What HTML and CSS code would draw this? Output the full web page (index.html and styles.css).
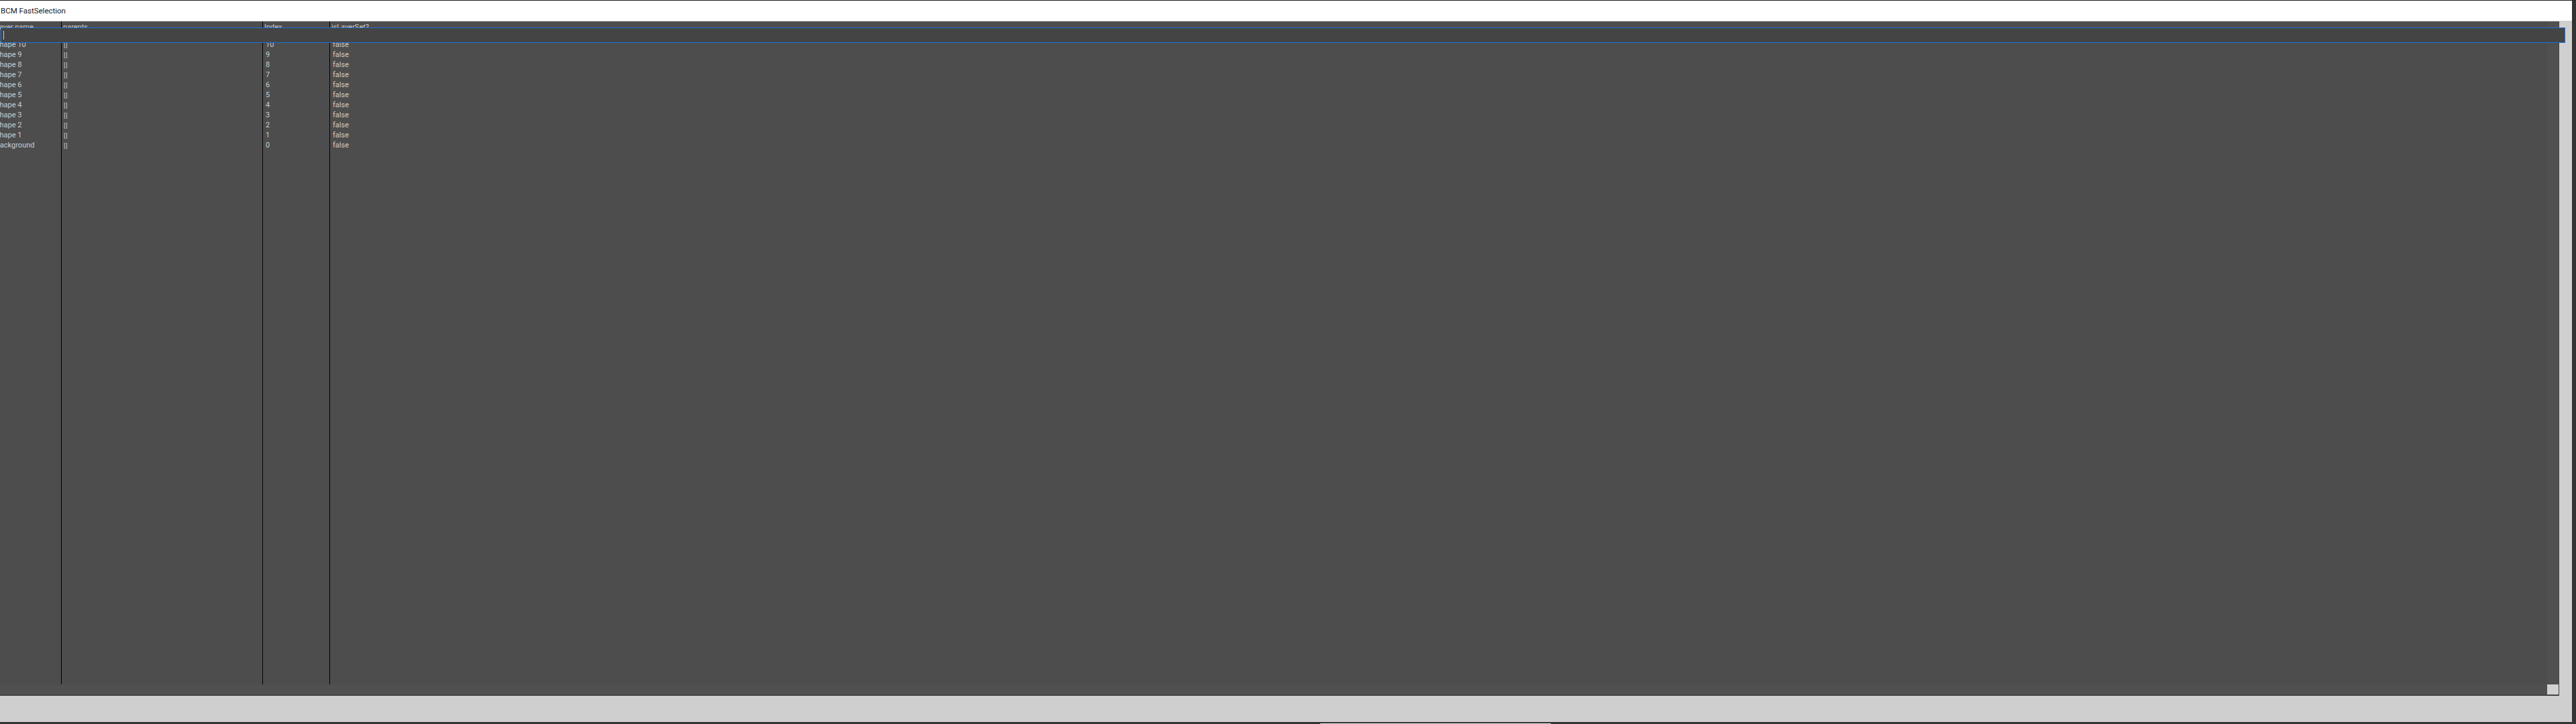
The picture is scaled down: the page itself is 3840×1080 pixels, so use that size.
FILE: index.html
```html
<!DOCTYPE html>
<html>
  <head>
    <title>BCM FastSelection</title>
    <link rel="stylesheet" href="styles.css">
  </head>
  <body>
    <div class="window">
      <div class="title-bar">BCM FastSelection</div>
      <div class="panel">
        <div class="list">
          <div class="columns">
            <div class="column col-name">
              <div class="col-head">Layer name</div>
              <div class="cell">Shape 10</div>
              <div class="cell">Shape 9</div>
              <div class="cell">Shape 8</div>
              <div class="cell">Shape 7</div>
              <div class="cell">Shape 6</div>
              <div class="cell">Shape 5</div>
              <div class="cell">Shape 4</div>
              <div class="cell">Shape 3</div>
              <div class="cell">Shape 2</div>
              <div class="cell">Shape 1</div>
              <div class="cell">Background</div>
            </div>
            <div class="column col-parents">
              <div class="col-head">parents</div>
              <div class="cell box">[]</div>
              <div class="cell box">[]</div>
              <div class="cell box">[]</div>
              <div class="cell box">[]</div>
              <div class="cell box">[]</div>
              <div class="cell box">[]</div>
              <div class="cell box">[]</div>
              <div class="cell box">[]</div>
              <div class="cell box">[]</div>
              <div class="cell box">[]</div>
              <div class="cell box">[]</div>
            </div>
            <div class="column col-index">
              <div class="col-head">Index</div>
              <div class="cell">10</div>
              <div class="cell">9</div>
              <div class="cell">8</div>
              <div class="cell">7</div>
              <div class="cell">6</div>
              <div class="cell">5</div>
              <div class="cell">4</div>
              <div class="cell">3</div>
              <div class="cell">2</div>
              <div class="cell">1</div>
              <div class="cell">0</div>
            </div>
            <div class="column col-set">
              <div class="col-head">isLayerSet?</div>
              <div class="cell">false</div>
              <div class="cell">false</div>
              <div class="cell">false</div>
              <div class="cell">false</div>
              <div class="cell">false</div>
              <div class="cell">false</div>
              <div class="cell">false</div>
              <div class="cell">false</div>
              <div class="cell">false</div>
              <div class="cell">false</div>
              <div class="cell">false</div>
            </div>
            <div class="v-scroll"></div>
          </div>
          <div class="h-scroll">
            <div class="corner"></div>
          </div>
        </div>
        <div class="filter"><span class="caret"></span></div>
      </div>
      <div class="bottom-edge"><div class="next-window"></div></div>
    </div>
  </body>
</html>
```

FILE: styles.css
```css
* {
  box-sizing: border-box;
}

html,
body {
  margin: 0;
  height: 1080px;
  overflow: hidden;
}

body {
  background-color: #333;
  font-family: Roboto, "Liberation Sans", sans-serif;
  font-size: 11px;
  color: #ccc;
}

.window {
  display: flex;
  flex-direction: column;
  width: 3840px;
  height: 1080px;
  border-top: 1px solid #1c1c1c;
  border-right: 6px solid #333;
}

.title-bar {
  height: 31px;
  padding-left: 1px;
  background-color: #fff;
  border-bottom: 1px solid #ccc;
  color: #1a1a1a;
  font-size: 11.5px;
  line-height: 30px;
  white-space: nowrap;
}

.panel {
  position: relative;
  flex: 1;
  padding-right: 19px;
  padding-bottom: 39px;
  background-color: #cfcfcf;
}

.list {
  display: flex;
  flex-direction: column;
  height: 1006px;
  background-color: #4d4d4d;
  border-right: 1px solid #444;
  border-bottom: 2px solid #444;
}

.columns {
  display: flex;
  height: 989px;
}

.column {
  border-right: 1px solid #000;
  overflow: hidden;
  white-space: nowrap;
}

.col-name {
  width: 92px;
}

.col-parents {
  width: 300px;
}

.col-index {
  width: 100px;
}

.col-set {
  flex: 1;
  border-right: 0;
}

.col-head {
  height: 28px;
  padding-left: 2px;
  padding-top: 1px;
  font-size: 11px;
  line-height: 15px;
}

.col-name .col-head,
.col-name .cell {
  margin-left: -7px;
  padding-left: 0;
}

.cell {
  height: 15px;
  padding-left: 4px;
  line-height: 14px;
  font-size: 11px;
}

.box {
  padding-left: 3px;
  font-size: 9.5px;
  line-height: 14px;
  letter-spacing: 0.5px;
}

.v-scroll {
  width: 17px;
  background-color: #505050;
}

.h-scroll {
  display: flex;
  justify-content: flex-end;
  flex: 1;
  background-color: #505050;
}

.corner {
  width: 17px;
  background-color: #d2d2d2;
}

/* text field sits over the list and runs past its right edge */
.filter {
  position: absolute;
  top: 9px;
  left: 1px;
  width: 3823px;
  height: 23px;
  padding: 4px 3px;
  background-color: #444;
  border: 1px solid #1f6fd8;
}

.caret {
  display: block;
  width: 1px;
  height: 13px;
  background-color: #ccc;
}

.bottom-edge {
  display: flex;
  align-items: flex-end;
  height: 3px;
  padding-left: 1968px;
  background-color: #333;
}

.next-window {
  width: 344px;
  height: 1px;
  background-color: #ddd;
}
```
